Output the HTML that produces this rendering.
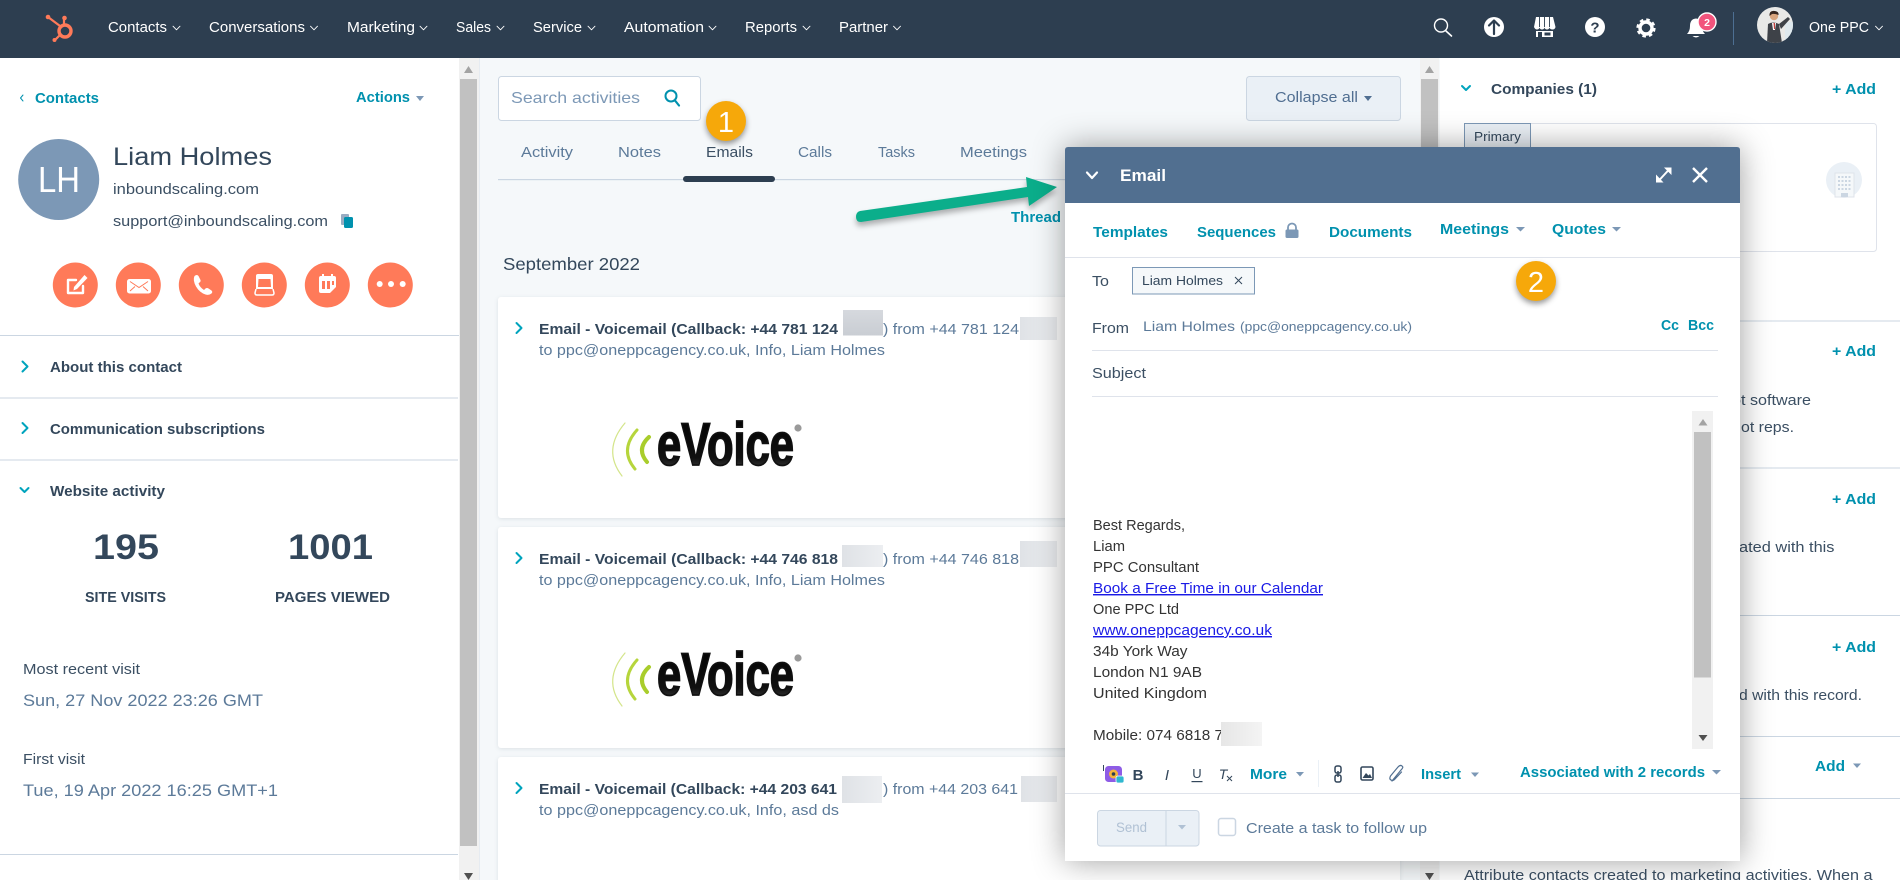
<!DOCTYPE html>
<html lang="en">
<head>
<meta charset="utf-8">
<title>Liam Holmes - Contact</title>
<style>
html,body{margin:0;padding:0;width:1900px;height:880px;overflow:hidden;background:#fff}
svg{display:block;position:absolute;left:0;top:0}
text{font-family:"Liberation Sans",Arial,sans-serif}
.nav{font-size:14.5px;fill:#fff}
.teal{font-size:14.5px;fill:#0091ae;font-weight:700}
.h{font-size:14.5px;fill:#33475b;font-weight:700}
.b{font-size:14.5px;fill:#3b4f63}
.m{font-size:14.5px;fill:#5c7a99}
.sig{font-size:14.5px;fill:#333}
.lnk{font-size:14.5px;fill:#1a1ae6;text-decoration:underline}
.st{fill:none;stroke-linecap:round;stroke-linejoin:round}
</style>
</head>
<body>
<svg width="1900" height="880" viewBox="0 0 1900 880" xmlns="http://www.w3.org/2000/svg">
<defs>
<linearGradient id="blurA" x1="0" y1="0" x2="0" y2="1"><stop offset="0" stop-color="#d6d9de"/><stop offset="1" stop-color="#c9cdd3"/></linearGradient>
<linearGradient id="blurB" x1="0" y1="0" x2="1" y2="0"><stop offset="0" stop-color="#dfe2e6"/><stop offset="1" stop-color="#eceef1"/></linearGradient>
<linearGradient id="blurC" x1="0" y1="0" x2="1" y2="0"><stop offset="0" stop-color="#e6e6e6"/><stop offset="1" stop-color="#f4f4f4"/></linearGradient>
<linearGradient id="ev" x1="0" y1="0" x2="0" y2="1"><stop offset="0" stop-color="#000"/><stop offset=".7" stop-color="#111"/><stop offset="1" stop-color="#555"/></linearGradient>
<g id="chevD"><path class="st" d="M-3.500-1.800 0 1.800 3.500-1.800" stroke="#fff" stroke-width=".9"/></g>
<g id="chevR"><path class="st" d="M-2.500-5 2.500 0-2.500 5" stroke="#00a4bd" stroke-width="2"/></g>
<g id="evoice">
<path class="st" d="M625 423Q602 450 622 476" stroke="#d4e58a" stroke-width="1.2"/>
<path class="st" d="M637 430Q619 450 635 469" stroke="#b6d53c" stroke-width="3"/>
<path class="st" d="M649 437Q636 449 647 462" stroke="#a9cd2c" stroke-width="4"/>
<text x="657" y="465" font-size="60" font-weight="700" fill="url(#ev)" stroke="#111" stroke-width="1.800" textLength="137" lengthAdjust="spacingAndGlyphs">eVoice</text>
<circle cx="798" cy="428" r="3.600" fill="#9a9a9a"/>
</g>
</defs>

<!-- base panels -->
<rect x="0" y="58" width="459" height="822" fill="#fff"/>
<rect x="479" y="58" width="961" height="822" fill="#f5f8fa"/>
<rect x="1440" y="58" width="460" height="822" fill="#fff"/>

<!-- top nav -->
<rect width="1900" height="58" fill="#2d3e50"/>
<g fill="#ff7a59" stroke="#ff7a59">
<circle cx="65" cy="31" r="6" fill="none" stroke-width="3.400"/>
<path d="M48 17 60 26M64 18V25M55 40 60 35" stroke-width="2.200" fill="none"/>
<circle cx="48" cy="17" r="2.300" stroke="none"/><circle cx="64.500" cy="18" r="2.300" stroke="none"/><circle cx="54.500" cy="40" r="2" stroke="none"/>
</g>
<text class="nav" x="108" y="32" textLength="59" lengthAdjust="spacingAndGlyphs">Contacts</text><use href="#chevD" x="176.500" y="28"/>
<text class="nav" x="209" y="32" textLength="96" lengthAdjust="spacingAndGlyphs">Conversations</text><use href="#chevD" x="314" y="28"/>
<text class="nav" x="347" y="32" textLength="68" lengthAdjust="spacingAndGlyphs">Marketing</text><use href="#chevD" x="423.500" y="28"/>
<text class="nav" x="456" y="32" textLength="35" lengthAdjust="spacingAndGlyphs">Sales</text><use href="#chevD" x="500.500" y="28"/>
<text class="nav" x="533" y="32" textLength="49" lengthAdjust="spacingAndGlyphs">Service</text><use href="#chevD" x="591.500" y="28"/>
<text class="nav" x="624" y="32" textLength="80" lengthAdjust="spacingAndGlyphs">Automation</text><use href="#chevD" x="712.500" y="28"/>
<text class="nav" x="745" y="32" textLength="52" lengthAdjust="spacingAndGlyphs">Reports</text><use href="#chevD" x="806.500" y="28"/>
<text class="nav" x="839" y="32" textLength="49" lengthAdjust="spacingAndGlyphs">Partner</text><use href="#chevD" x="897" y="28"/>

<!-- nav right icons -->
<circle cx="1441" cy="25.500" r="6.500" fill="none" stroke="#fff" stroke-width="1.400"/><path d="M1446 31 1451.500 36" stroke="#fff" stroke-width="1.600" stroke-linecap="round"/>
<circle cx="1494" cy="27" r="10" fill="#fff"/><path class="st" d="M1494 34V21M1489 25.500 1494 20.500 1499 25.500" stroke="#2d3e50" stroke-width="2.200"/>
<path d="M1536 17H1553L1555.500 27Q1555 29.500 1552.500 29.500T1549.500 27.500Q1549 29.500 1547 29.500T1544.500 27.500Q1544 29.500 1542 29.500T1539.500 27.500Q1539 29.500 1537 29.500T1534 27Z" fill="#fff"/>
<path d="M1536 31H1553V37H1536Z" fill="#fff"/><rect x="1538" y="32" width="4" height="5" fill="#2d3e50"/><rect x="1544.500" y="32.500" width="6" height="3" fill="#2d3e50"/>
<path d="M1539.500 17V27M1544.500 17V27M1549.500 17V27" stroke="#2d3e50" stroke-width=".9"/>
<circle cx="1595" cy="27" r="10" fill="#fff"/><text x="1595" y="32.500" text-anchor="middle" font-size="15" font-weight="700" fill="#2d3e50">?</text>
<circle cx="1646" cy="28" r="6" fill="none" stroke="#fff" stroke-width="3.400"/><circle cx="1646" cy="28" r="8.300" fill="none" stroke="#fff" stroke-width="2.600" stroke-dasharray="3.500 3.020"/>
<path d="M1687 34Q1690 31 1690 26Q1690 19 1696 18.500Q1702 19 1702 26Q1702 31 1705 34Z" fill="#fff"/><path d="M1692.500 36Q1696 39 1699.500 36Z" fill="#fff"/>
<circle cx="1707" cy="22" r="9" fill="#f2547d" stroke="#fff" stroke-width="1.400"/><text x="1707" y="26" text-anchor="middle" font-size="10.500" font-weight="700" fill="#fff">2</text>
<rect x="1733" y="12" width="1" height="33" fill="#4d6f92"/>
<clipPath id="av"><circle cx="1775" cy="25" r="18"/></clipPath>
<g clip-path="url(#av)">
<rect x="1757" y="7" width="36" height="36" fill="#e9e9e7"/>
<rect x="1785" y="22" width="8" height="21" fill="#dfe9ee"/><rect x="1787" y="39" width="6" height="4" fill="#7db2c9"/>
<path d="M1768 24Q1773 21 1779 24L1782 43H1767Z" fill="#3e4248"/><path d="M1779 24 1788 17 1790 19 1781 29Z" fill="#3e4248"/>
<path d="M1772 23H1776L1775 30H1773Z" fill="#fff"/><path d="M1773.500 23H1775L1775 29H1774Z" fill="#c3403e"/>
<circle cx="1774" cy="16" r="4.200" fill="#d9a57e"/><path d="M1769.500 16Q1769 10 1775 11Q1779 11.500 1778.500 15Q1775 13.500 1772 14Z" fill="#36261f"/>
</g>
<text class="nav" x="1809" y="32" textLength="60" lengthAdjust="spacingAndGlyphs">One PPC</text><use href="#chevD" x="1879" y="28"/>

<!-- left scrollbar -->
<rect x="459" y="58" width="20" height="822" fill="#f1f1f1"/>
<rect x="460" y="79" width="17" height="767" fill="#c1c1c1"/>
<rect x="479" y="58" width="1" height="822" fill="#e6ebf1"/>
<path d="M468.500 66 473 73H464Z" fill="#a3a3a3"/><path d="M464 873H473L468.500 880Z" fill="#505050"/>

<!-- left panel -->
<path class="st" d="M23 95 20.500 98 23 101" stroke="#0091ae" stroke-width="1"/>
<text class="teal" x="35" y="103" textLength="64" lengthAdjust="spacingAndGlyphs">Contacts</text>
<text class="teal" x="356" y="102" textLength="54" lengthAdjust="spacingAndGlyphs">Actions</text>
<path d="M416 96H424L420 101Z" fill="#7c98b6"/>
<circle cx="58.700" cy="179.500" r="40.500" fill="#7c98b6"/>
<text x="38" y="192" font-size="36" fill="#fff" textLength="42" lengthAdjust="spacingAndGlyphs">LH</text>
<text x="113" y="165" font-size="25" fill="#33475b" textLength="159" lengthAdjust="spacingAndGlyphs">Liam Holmes</text>
<text class="b" x="113" y="194" textLength="146" lengthAdjust="spacingAndGlyphs">inboundscaling.com</text>
<text class="b" x="113" y="226" textLength="215" lengthAdjust="spacingAndGlyphs">support@inboundscaling.com</text>
<rect x="341" y="214" width="8" height="11" rx="1" fill="#99acc2"/><rect x="344" y="217" width="9" height="11" rx="1.500" fill="#0091ae"/>

<g fill="#ff7a59">
<circle cx="75.300" cy="285" r="22.500"/><circle cx="138.300" cy="285" r="22.500"/><circle cx="201.300" cy="285" r="22.500"/><circle cx="264.300" cy="285" r="22.500"/><circle cx="327.300" cy="285" r="22.500"/><circle cx="390.300" cy="285" r="22.500"/>
</g>
<path class="st" d="M76 280H68V293H83V286" stroke="#fff" stroke-width="2.400"/><path d="M74 287 84.500 275 87.500 278 77 289 73.500 290.500Z" fill="#fff"/>
<rect x="127" y="279" width="24" height="14.500" rx="2.500" fill="#fff"/><path d="M130 281.500 139 287.500 148 281.500M130 291 135 286.500M148 291 143 286.500" fill="none" stroke="#ff7a59" stroke-width="1"/>
<path d="M194.500 276Q197 274 198.500 276L200.500 280Q201 281.500 199.500 282.500L198.500 283.500Q200 287.500 204 290L205.500 288.500Q207 287.500 208.500 288.500L211.500 290.500Q213 292 211.500 293.500Q209 295.500 205.500 294.500Q199.500 292.500 196 286.500Q192.500 280 194.500 276Z" fill="#fff"/>
<path d="M256 276Q256 274 258 274H271Q273 274 273 276V289H256Z" fill="#fff"/><path d="M258.500 279H270.500L271 287H258Z" fill="#ff7a59"/><path d="M256 289 255 293Q255 295 257 295H272Q274 295 274 293L273 289" fill="none" stroke="#fff" stroke-width="1.500"/>
<path d="M321 276H334Q336 276 336 278V287L330 293H321Q319 293 319 291V278Q319 276 321 276Z" fill="#fff"/><path d="M323 274V277M332 274V277" stroke="#fff" stroke-width="2"/><path d="M322 281H325V289H322ZM327 281H330V289H327ZM332 281H334V285H332Z" fill="#ff7a59"/>
<circle cx="379.700" cy="284" r="3" fill="#fff"/><circle cx="391" cy="284" r="3" fill="#fff"/><circle cx="402.700" cy="284" r="3" fill="#fff"/>

<rect x="0" y="335" width="459" height="1" fill="#cbd6e2"/>
<use href="#chevR" x="25" y="366.500"/>
<text class="h" x="50" y="372" textLength="132" lengthAdjust="spacingAndGlyphs">About this contact</text>
<rect x="0" y="397.500" width="458" height="1" fill="#cbd6e2"/>
<use href="#chevR" x="25" y="428"/>
<text class="h" x="50" y="434" textLength="215" lengthAdjust="spacingAndGlyphs">Communication subscriptions</text>
<rect x="0" y="459.500" width="458" height="1" fill="#cbd6e2"/>
<path class="st" d="M20.500 488 24.500 492 28.500 488" stroke="#00a4bd" stroke-width="2"/>
<text class="h" x="50" y="496" textLength="115" lengthAdjust="spacingAndGlyphs">Website activity</text>
<text x="93" y="559" font-size="35" font-weight="700" fill="#33475b" textLength="66" lengthAdjust="spacingAndGlyphs">195</text>
<text x="288" y="559" font-size="35" font-weight="700" fill="#33475b" textLength="85" lengthAdjust="spacingAndGlyphs">1001</text>
<text class="h" x="85" y="602" textLength="81" lengthAdjust="spacingAndGlyphs">SITE VISITS</text>
<text class="h" x="275" y="602" textLength="115" lengthAdjust="spacingAndGlyphs">PAGES VIEWED</text>
<text class="b" x="23" y="674" textLength="117" lengthAdjust="spacingAndGlyphs">Most recent visit</text>
<text x="23" y="706" font-size="17" fill="#5c7a99" textLength="240" lengthAdjust="spacingAndGlyphs">Sun, 27 Nov 2022 23:26 GMT</text>
<text class="b" x="23" y="764" textLength="62" lengthAdjust="spacingAndGlyphs">First visit</text>
<text x="23" y="796" font-size="17" fill="#5c7a99" textLength="255" lengthAdjust="spacingAndGlyphs">Tue, 19 Apr 2022 16:25 GMT+1</text>
<rect x="0" y="854" width="458" height="1" fill="#cbd6e2"/>

<!-- main column -->
<rect x="498.500" y="76.500" width="202" height="44" rx="3" fill="#fff" stroke="#cbd6e2"/>
<text x="511" y="103" font-size="16" fill="#7c98b6" textLength="129" lengthAdjust="spacingAndGlyphs">Search activities</text>
<circle cx="671" cy="96" r="5.500" fill="none" stroke="#0091ae" stroke-width="2"/><path d="M675 100.500 679 105.500" stroke="#0091ae" stroke-width="2.200" stroke-linecap="round"/>

<text class="m" x="521" y="157" textLength="52" lengthAdjust="spacingAndGlyphs">Activity</text>
<text class="m" x="618" y="157" textLength="43" lengthAdjust="spacingAndGlyphs">Notes</text>
<text class="b" x="706" y="157" textLength="47" lengthAdjust="spacingAndGlyphs">Emails</text>
<text class="m" x="798" y="157" textLength="34" lengthAdjust="spacingAndGlyphs">Calls</text>
<text class="m" x="878" y="157" textLength="37" lengthAdjust="spacingAndGlyphs">Tasks</text>
<text class="m" x="960" y="157" textLength="67" lengthAdjust="spacingAndGlyphs">Meetings</text>
<rect x="498" y="179" width="902" height="1.200" fill="#cbd6e2"/>
<rect x="683" y="176" width="92" height="6" rx="3" fill="#2d3e50"/>

<rect x="1246.500" y="76.500" width="154" height="44" rx="3" fill="#eaf0f6" stroke="#cbd6e2"/>
<text x="1275" y="102" font-size="15" fill="#506e91" textLength="83" lengthAdjust="spacingAndGlyphs">Collapse all</text>
<path d="M1364 96H1372L1368 101Z" fill="#506e91"/>

<text class="teal" x="1011" y="222" textLength="50" lengthAdjust="spacingAndGlyphs">Thread</text>
<text x="503" y="270" font-size="17.500" fill="#33475b" textLength="137" lengthAdjust="spacingAndGlyphs">September 2022</text>

<!-- main scrollbar -->
<rect x="1420" y="58" width="19" height="822" fill="#f1f1f1"/>
<rect x="1421" y="79" width="17" height="600" fill="#c1c1c1"/>
<path d="M1429.500 66 1434 73H1425Z" fill="#a3a3a3"/><path d="M1425 873H1434L1429.500 880Z" fill="#505050"/>

<!-- cards -->
<g style="filter:drop-shadow(0 1px 2px rgba(45,62,80,.12))">
<rect x="498" y="297" width="902" height="221" rx="3" fill="#fff"/>
<rect x="498" y="527" width="902" height="221" rx="3" fill="#fff"/>
<rect x="498" y="757" width="902" height="140" rx="3" fill="#fff"/>
</g>

<use href="#chevR" x="519" y="328"/>
<text class="h" x="539" y="334" textLength="299" lengthAdjust="spacingAndGlyphs">Email - Voicemail (Callback: +44 781 124</text>
<rect x="843" y="310" width="40" height="25.500" fill="url(#blurA)"/>
<text class="m" x="883" y="334" textLength="136" lengthAdjust="spacingAndGlyphs">) from +44 781 124</text>
<rect x="1020" y="317" width="37" height="23" fill="url(#blurB)"/>
<text class="m" x="539" y="355" textLength="346" lengthAdjust="spacingAndGlyphs">to ppc@oneppcagency.co.uk, Info, Liam Holmes</text>
<use href="#evoice"/>

<use href="#chevR" x="519" y="558"/>
<text class="h" x="539" y="564" textLength="299" lengthAdjust="spacingAndGlyphs">Email - Voicemail (Callback: +44 746 818</text>
<rect x="842" y="545" width="41" height="22" fill="url(#blurB)"/>
<text class="m" x="883" y="564" textLength="136" lengthAdjust="spacingAndGlyphs">) from +44 746 818</text>
<rect x="1020" y="541" width="37" height="26" fill="url(#blurB)"/>
<text class="m" x="539" y="585" textLength="346" lengthAdjust="spacingAndGlyphs">to ppc@oneppcagency.co.uk, Info, Liam Holmes</text>
<use href="#evoice" y="230"/>

<use href="#chevR" x="519" y="788"/>
<text class="h" x="539" y="794" textLength="298" lengthAdjust="spacingAndGlyphs">Email - Voicemail (Callback: +44 203 641</text>
<rect x="842" y="776" width="40" height="27" fill="url(#blurB)"/>
<text class="m" x="883" y="794" textLength="135" lengthAdjust="spacingAndGlyphs">) from +44 203 641</text>
<rect x="1021" y="776" width="36" height="26" fill="url(#blurB)"/>
<text class="m" x="539" y="815" textLength="300" lengthAdjust="spacingAndGlyphs">to ppc@oneppcagency.co.uk, Info, asd ds</text>

<!-- right panel -->
<path class="st" d="M1462 86 1466 90 1470 86" stroke="#00a4bd" stroke-width="2"/>
<text class="h" x="1491" y="94" textLength="106" lengthAdjust="spacingAndGlyphs">Companies (1)</text>
<text class="teal" x="1832" y="94" textLength="44" lengthAdjust="spacingAndGlyphs">+ Add</text>
<rect x="1464.500" y="123.500" width="412" height="128" rx="3" fill="#fff" stroke="#dfe3eb"/>
<rect x="1464.500" y="123.500" width="66" height="30" fill="#eaf0f6" stroke="#7c98b6"/>
<text x="1474" y="141" font-size="13" fill="#33475b" textLength="47" lengthAdjust="spacingAndGlyphs">Primary</text>
<circle cx="1844" cy="180" r="18" fill="#eaf0f6"/>
<rect x="1835" y="173" width="19" height="24" fill="#f5f8fa" stroke="#dfe3eb"/>
<path d="M1838 177H1851M1838 181H1851M1838 185H1851M1838 189H1851" stroke="#cbd6e2" stroke-width="2" stroke-dasharray="2 1.500"/>
<rect x="1841" y="193" width="7" height="4" fill="#cbd6e2"/>
<rect x="1440" y="320.500" width="460" height="1" fill="#cbd6e2"/>
<text class="teal" x="1832" y="356" textLength="44" lengthAdjust="spacingAndGlyphs">+ Add</text>
<text class="b" x="1732" y="405" textLength="79" lengthAdjust="spacingAndGlyphs">ot software</text>
<text class="b" x="1741" y="432" textLength="53" lengthAdjust="spacingAndGlyphs">ot reps.</text>
<rect x="1440" y="467.500" width="460" height="1" fill="#cbd6e2"/>
<text class="teal" x="1832" y="504" textLength="44" lengthAdjust="spacingAndGlyphs">+ Add</text>
<text class="b" x="1739" y="552" textLength="95.500" lengthAdjust="spacingAndGlyphs">ated with this</text>
<rect x="1440" y="615" width="460" height="1" fill="#cbd6e2"/>
<text class="teal" x="1832" y="652" textLength="44" lengthAdjust="spacingAndGlyphs">+ Add</text>
<text class="b" x="1739" y="700" textLength="123" lengthAdjust="spacingAndGlyphs">d with this record.</text>
<rect x="1440" y="736" width="460" height="1" fill="#cbd6e2"/>
<text class="teal" x="1815" y="771" textLength="30" lengthAdjust="spacingAndGlyphs">Add</text>
<path d="M1853 763.500H1861L1857 768Z" fill="#7c98b6"/>
<rect x="1440" y="798" width="460" height="1" fill="#cbd6e2"/>
<text class="b" x="1464" y="880" textLength="408.500" lengthAdjust="spacingAndGlyphs">Attribute contacts created to marketing activities. When a</text>

<!-- green arrow + badge 1 -->
<g style="filter:drop-shadow(0 4px 3px rgba(0,0,0,.3))">
<path d="M860 211 1027 187 1026 177 1057 187 1029 206 1028 197 861 222Q856 222 856 217Q856 212 860 211Z" fill="#0bae8b"/>
</g>
<g style="filter:drop-shadow(0 3px 3px rgba(0,0,0,.4))"><circle cx="726" cy="121" r="20" fill="#f6a80a"/></g>
<text x="726" y="132" text-anchor="middle" font-size="29" fill="#fff">1</text>

<!-- email modal -->
<g style="filter:drop-shadow(0 0 16px rgba(0,0,0,.38))">
<path d="M1065 150Q1065 147 1068 147H1737Q1740 147 1740 150V861H1065Z" fill="#fff"/>
</g>
<path d="M1065 150Q1065 147 1068 147H1737Q1740 147 1740 150V203H1065Z" fill="#516f90"/>
<path class="st" d="M1087 172.500 1092 178 1097 172.500" stroke="#fff" stroke-width="2.200"/>
<text x="1120" y="181" font-size="16.500" font-weight="700" fill="#fff" textLength="46" lengthAdjust="spacingAndGlyphs">Email</text>
<path d="M1658 181.500 1670 168.500" stroke="#fff" stroke-width="2"/>
<path d="M1664 167.500H1671.500V175ZM1656 174.500V182.500H1663.500Z" fill="#fff"/>
<path d="M1693 168 1707 182M1707 168 1693 182" stroke="#fff" stroke-width="2.400"/>

<text class="teal" x="1093" y="237" textLength="75" lengthAdjust="spacingAndGlyphs">Templates</text>
<text class="teal" x="1197" y="237" textLength="79" lengthAdjust="spacingAndGlyphs">Sequences</text>
<rect x="1285.500" y="229.500" width="13" height="8.500" rx="1.500" fill="#7c98b6"/><path d="M1288 230V227.500A4 4 0 0 1 1296 227.500V230" fill="none" stroke="#7c98b6" stroke-width="1.800"/>
<text class="teal" x="1329" y="237" textLength="83" lengthAdjust="spacingAndGlyphs">Documents</text>
<text class="teal" x="1440" y="234" textLength="69" lengthAdjust="spacingAndGlyphs">Meetings</text>
<path d="M1516 227H1525L1520.500 231.500Z" fill="#7c98b6"/>
<text class="teal" x="1552" y="234" textLength="54" lengthAdjust="spacingAndGlyphs">Quotes</text>
<path d="M1612 227H1621L1616.500 231.500Z" fill="#7c98b6"/>
<rect x="1065" y="257" width="675" height="1" fill="#dfe3eb"/>

<text class="b" x="1092" y="286" textLength="17" lengthAdjust="spacingAndGlyphs">To</text>
<rect x="1132.500" y="267.500" width="122" height="26.500" fill="#f5f8fa" stroke="#7c98b6"/>
<text x="1142" y="285" font-size="13" fill="#33475b" textLength="81" lengthAdjust="spacingAndGlyphs">Liam Holmes</text>
<path d="M1235 277 1242 284M1242 277 1235 284" stroke="#33475b" stroke-width="1"/>

<text class="b" x="1092" y="333" textLength="37" lengthAdjust="spacingAndGlyphs">From</text>
<text x="1143" y="331" font-size="14" fill="#5c7a99" textLength="92" lengthAdjust="spacingAndGlyphs">Liam Holmes</text>
<text x="1240" y="331" font-size="12.500" fill="#5c7a99" textLength="172" lengthAdjust="spacingAndGlyphs">(ppc@oneppcagency.co.uk)</text>
<text class="teal" x="1661" y="330" textLength="18" lengthAdjust="spacingAndGlyphs">Cc</text>
<text class="teal" x="1688" y="330" textLength="26" lengthAdjust="spacingAndGlyphs">Bcc</text>
<rect x="1092" y="350" width="626" height="1" fill="#dfe3eb"/>
<text class="b" x="1092" y="378" textLength="54" lengthAdjust="spacingAndGlyphs">Subject</text>
<rect x="1092" y="396" width="626" height="1" fill="#dfe3eb"/>

<rect x="1692" y="411" width="21" height="338" fill="#f1f1f1"/>
<rect x="1694" y="432" width="17" height="245.500" fill="#c1c1c1"/>
<path d="M1703 419 1707.500 425.500H1698.500Z" fill="#a3a3a3"/><path d="M1698.500 735H1707.500L1703 741Z" fill="#505050"/>

<text class="sig" x="1093" y="530" textLength="92" lengthAdjust="spacingAndGlyphs">Best Regards,</text>
<text class="sig" x="1093" y="551" textLength="32" lengthAdjust="spacingAndGlyphs">Liam</text>
<text class="sig" x="1093" y="572" textLength="106" lengthAdjust="spacingAndGlyphs">PPC Consultant</text>
<text class="lnk" x="1093" y="593" textLength="230" lengthAdjust="spacingAndGlyphs">Book a Free Time in our Calendar</text>
<text class="sig" x="1093" y="614" textLength="86" lengthAdjust="spacingAndGlyphs">One PPC Ltd</text>
<text class="lnk" x="1093" y="635" textLength="179" lengthAdjust="spacingAndGlyphs">www.oneppcagency.co.uk</text>
<text class="sig" x="1093" y="656" textLength="94.500" lengthAdjust="spacingAndGlyphs">34b York Way</text>
<text class="sig" x="1093" y="677" textLength="109" lengthAdjust="spacingAndGlyphs">London N1 9AB</text>
<text class="sig" x="1093" y="698" textLength="114" lengthAdjust="spacingAndGlyphs">United Kingdom</text>
<text class="sig" x="1093" y="740" textLength="130" lengthAdjust="spacingAndGlyphs">Mobile: 074 6818 7</text>
<rect x="1221" y="722" width="41" height="24" fill="url(#blurC)"/>

<!-- toolbar -->
<rect x="1105" y="766" width="17" height="16" rx="3.500" fill="#8e5ce6"/>
<circle cx="1113.500" cy="774" r="4.500" fill="#f5b43c"/><circle cx="1113.500" cy="774" r="1.800" fill="#2d3e50"/>
<rect x="1116" y="776" width="8" height="7" rx="2" fill="#2fb8d0" stroke="#fff" stroke-width=".8"/>
<path d="M1103.500 765V771" stroke="#33475b"/>
<text x="1138" y="780" text-anchor="middle" font-size="15" font-weight="700" fill="#33475b">B</text>
<text x="1167" y="780" text-anchor="middle" font-size="15" font-style="italic" fill="#33475b" font-family="Liberation Serif">I</text>
<text x="1197" y="778" text-anchor="middle" font-size="13" fill="#33475b">U</text><rect x="1191.500" y="781" width="11" height="1.200" fill="#33475b"/>
<text x="1223" y="779" text-anchor="middle" font-size="14" font-style="italic" fill="#33475b">T</text>
<path d="M1227 776 1232 781M1232 776 1227 781" stroke="#33475b"/>
<text class="teal" x="1250" y="779" font-size="15" textLength="37" lengthAdjust="spacingAndGlyphs">More</text>
<path d="M1296 772H1304L1300 776.500Z" fill="#7c98b6"/>
<rect x="1318" y="760" width="1" height="27" fill="#eaf0f6"/>
<rect x="1335" y="766" width="6" height="7" rx="2" fill="none" stroke="#33475b" stroke-width="1.500"/><rect x="1335" y="775" width="6" height="7" rx="2" fill="none" stroke="#33475b" stroke-width="1.500"/><path d="M1338 771V777" stroke="#33475b" stroke-width="1.500"/>
<rect x="1361" y="767" width="12" height="13" rx="1.500" fill="none" stroke="#33475b" stroke-width="1.600"/><path d="M1362.500 778 1366 773 1368.500 775.500 1370 774 1372 778Z" fill="#33475b"/>
<path class="st" d="M1392 781 1401 770Q1404 767 1402 766Q1400 764.500 1398 767L1390.500 776Q1389 779 1391 780Q1393 781.500 1395 779L1401.500 772" stroke="#516f90" stroke-width="1.200"/>
<text class="teal" x="1421" y="779" font-size="15" textLength="40" lengthAdjust="spacingAndGlyphs">Insert</text>
<path d="M1471 772.500H1479L1475 777Z" fill="#7c98b6"/>
<text class="teal" x="1520" y="777" textLength="185" lengthAdjust="spacingAndGlyphs">Associated with 2 records</text>
<path d="M1712 770H1721L1716.500 774.500Z" fill="#7c98b6"/>
<rect x="1065" y="793" width="675" height="1" fill="#dfe3eb"/>

<rect x="1097.500" y="810.500" width="101.500" height="35.500" rx="3" fill="#eaf0f6" stroke="#cbd6e2"/>
<rect x="1165.500" y="811" width="1" height="35" fill="#cbd6e2"/>
<text x="1116" y="832" font-size="14" fill="#b0c1d4" textLength="31" lengthAdjust="spacingAndGlyphs">Send</text>
<path d="M1178 825H1186L1182 829.500Z" fill="#b0c1d4"/>
<rect x="1218.500" y="818.500" width="17" height="17" rx="2.500" fill="#fff" stroke="#cbd6e2" stroke-width="1.500"/>
<text class="m" x="1246" y="833" textLength="181" lengthAdjust="spacingAndGlyphs">Create a task to follow up</text>

<!-- badge 2 -->
<g style="filter:drop-shadow(0 3px 3px rgba(0,0,0,.4))"><circle cx="1536" cy="281" r="20" fill="#f6a80a"/></g>
<text x="1536" y="292" text-anchor="middle" font-size="29" fill="#fff">2</text>
</svg>
</body>
</html>
